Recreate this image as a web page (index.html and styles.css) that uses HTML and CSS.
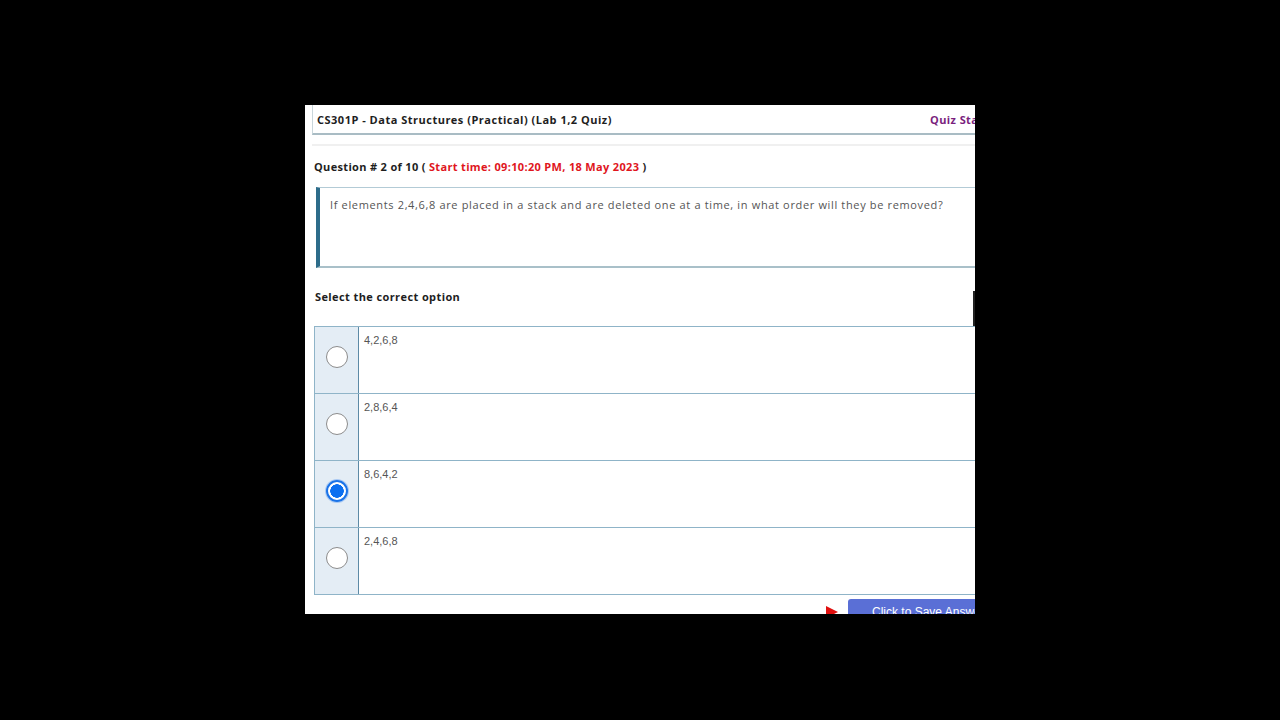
FILE: index.html
```html
<!DOCTYPE html>
<html>
<head>
<meta charset="utf-8">
<link rel="stylesheet" href="styles.css">
</head>
<body>
<div class="screen">
  <div class="panel">
    <div class="inner">
      <div class="topbar">
        <span class="course">CS301P - Data Structures (Practical) (Lab 1,2 Quiz)</span>
        <span class="status">Quiz Status</span>
      </div>
      <div class="divider"></div>
      <div class="qline">Question # 2 of 10 ( <span class="start">Start time: 09:10:20 PM, 18 May 2023</span> )</div>
      <div class="qbox">If elements 2,4,6,8 are placed in a stack and are deleted one at a time, in what order will they be removed?</div>
      <div class="select-row">
        <span class="select">Select the correct option</span>
        <span class="edge-bar"></span>
      </div>
      <div class="options">
        <div class="opt">
          <div class="cell-radio"><span class="radio"></span></div>
          <div class="cell-text">4,2,6,8</div>
        </div>
        <div class="opt">
          <div class="cell-radio"><span class="radio"></span></div>
          <div class="cell-text">2,8,6,4</div>
        </div>
        <div class="opt">
          <div class="cell-radio"><span class="radio checked"></span></div>
          <div class="cell-text">8,6,4,2</div>
        </div>
        <div class="opt">
          <div class="cell-radio"><span class="radio"></span></div>
          <div class="cell-text">2,4,6,8</div>
        </div>
      </div>
      <div class="actions">
        <span class="arrow"></span>
        <span class="save">Click to Save Answer</span>
      </div>
    </div>
  </div>
</div>
</body>
</html>
```

FILE: styles.css
```css
html, body {
  margin: 0;
  padding: 0;
  background: #000;
}

.screen {
  width: 1280px;
  height: 720px;
  padding: 105px 0 0 305px;
  box-sizing: border-box;
}

.panel {
  width: 670px;
  height: 509px;
  background: #fff;
  overflow: hidden;
}

.inner {
  width: 720px;
  font-family: "Open Sans", "Noto Sans", sans-serif;
}

.topbar {
  margin-left: 7px;
  height: 28px;
  border-left: 1px solid #c9d6db;
  border-bottom: 2px solid #a9bcc4;
  display: flex;
  align-items: center;
  justify-content: space-between;
  padding: 0 28px 0 4px;
}

.course {
  font-size: 11px;
  font-weight: 700;
  color: #1e1e1e;
  letter-spacing: 0.5px;
}

.status {
  font-size: 11px;
  font-weight: 700;
  color: #7a1f7e;
  letter-spacing: 0.4px;
}

.divider {
  margin: 9px 0 0 7px;
  height: 2px;
  background: #f0f0f0;
}

.qline {
  margin: 13px 0 0 9px;
  font-size: 11px;
  font-weight: 700;
  color: #1e1e1e;
  line-height: 16px;
  letter-spacing: 0.33px;
}

.start {
  color: #e0161d;
}

.qbox {
  margin: 12px 0 0 11px;
  height: 81px;
  border-top: 1px solid #b3cbd6;
  border-bottom: 2px solid #a9c0c9;
  border-left: 4px solid #2d6c8a;
  padding: 8px 0 0 10px;
  box-sizing: border-box;
  font-size: 11px;
  color: #555;
  letter-spacing: 0.65px;
  line-height: 18px;
}

.select-row {
  display: flex;
  justify-content: space-between;
  align-items: flex-start;
  margin: 21px 0 0 10px;
  width: 660px;
  height: 37px;
}

.select {
  font-size: 11px;
  font-weight: 700;
  color: #1e1e1e;
  line-height: 16px;
  letter-spacing: 0.4px;
}

.edge-bar {
  width: 2px;
  height: 35px;
  background: #222;
  margin-top: 2px;
}

.options {
  margin-left: 9px;
  border-top: 1px solid #8fb4c8;
  border-left: 1px solid #8fb4c8;
}

.opt {
  display: flex;
  height: 67px;
  border-bottom: 1px solid #8fb4c8;
  box-sizing: border-box;
}

.cell-radio {
  width: 44px;
  background: #e4edf5;
  border-right: 1px solid #5d8aa6;
  box-sizing: border-box;
  display: flex;
  align-items: center;
  justify-content: center;
}

.radio {
  width: 22px;
  height: 22px;
  border-radius: 50%;
  border: 1px solid #8c8c8c;
  background: #fff;
  box-sizing: border-box;
  display: block;
  margin-top: -6px;
}

.radio.checked {
  border: 2px solid #1a73e8;
  background: radial-gradient(circle, #0b6ff0 0 6.5px, #fff 7px);
  box-shadow: 0 0 0 1px #a9c9f3;
}

.cell-text {
  flex: 1;
  padding: 6px 0 0 5px;
  font-family: "Liberation Sans", Arial, sans-serif;
  font-size: 11px;
  color: #555;
  line-height: 14px;
}

.actions {
  display: flex;
  align-items: flex-start;
  margin-top: 4px;
  padding-left: 521px;
}

.arrow {
  width: 0;
  height: 0;
  border-top: 6px solid transparent;
  border-bottom: 6px solid transparent;
  border-left: 12px solid #e0100f;
  margin-top: 7px;
  margin-right: 10px;
}

.save {
  background: #5a6fd6;
  color: #fff;
  font-family: "Liberation Sans", Arial, sans-serif;
  font-size: 12px;
  padding: 6px 24px 10px 24px;
  border-radius: 3px 3px 0 0;
  white-space: nowrap;
}
```
